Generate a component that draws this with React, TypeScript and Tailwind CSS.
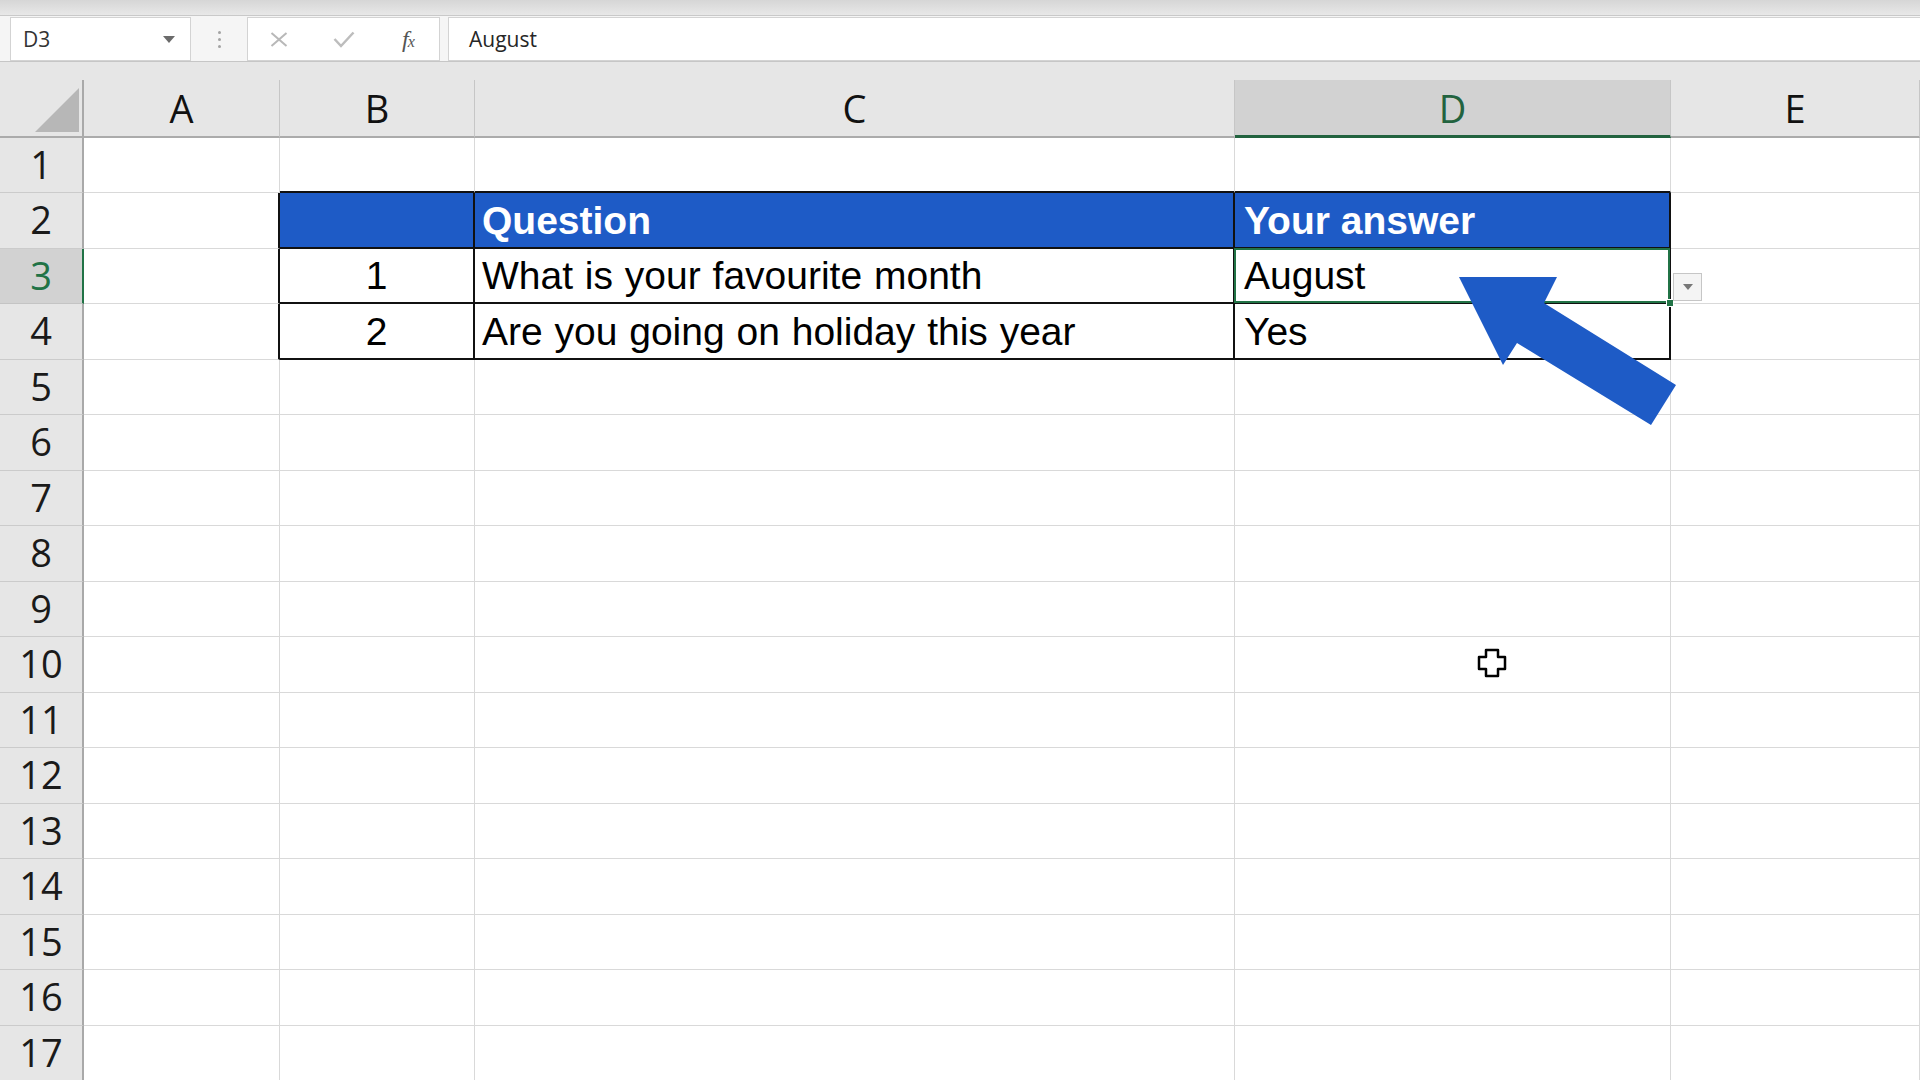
import React from "react";

const ROWS = Array.from({ length: 17 }, (_, i) => i + 1);
const LETTERS = ["A", "B", "C", "D", "E"];
const WIDTHS = ["w-[196px]", "w-[195px]", "w-[760px]", "w-[436px]", "flex-1 min-w-0"];

const TABLE: Record<number, string[]> = {
  2: ["", "Question", "Your answer"],
  3: ["1", "What is your favourite month", "August"],
  4: ["2", "Are you going on holiday this year", "Yes"],
};

function cellCls(r: number, c: number) {
  const parts = ["h-full flex items-center shrink-0 overflow-visible whitespace-nowrap", WIDTHS[c]];
  const rightBlack = r >= 2 && r <= 4 && c <= 3;
  const bottomBlack = r <= 4 && c >= 1 && c <= 3;
  parts.push(rightBlack ? "border-r-2 border-r-[#111111]" : "border-r border-r-[#d9d9d9]");
  parts.push(bottomBlack ? "border-b-2 border-b-[#111111]" : "border-b border-b-[#d9d9d9]");
  parts.push(r === 2 && c >= 1 && c <= 3 ? "bg-[#1e5bc6]" : "bg-white");
  if (c === 1) parts.push("justify-center");
  if (c === 2) parts.push("pl-[7px]");
  if (c === 3) parts.push("pl-[9px]");
  if (r === 3 && c === 3) parts.push("relative");
  return parts.join(" ");
}

function Cell({ r, c }: { r: number; c: number }) {
  const data = TABLE[r];
  const text = data && c >= 1 && c <= 3 ? data[c - 1] : "";
  const header = r === 2;
  return (
    <div className={cellCls(r, c)}>
      {text ? (
        <span
          className={
            header
              ? "font-['Liberation_Sans',Arial,sans-serif] text-[39px] font-bold text-white leading-none"
              : "font-['Liberation_Sans',Arial,sans-serif] text-[39px] text-black leading-none [word-spacing:1px]"
          }
        >
          {text}
        </span>
      ) : null}
      {r === 3 && c === 3 ? (
        <>
          <div className="absolute -left-[1px] -top-[1px] -right-[1px] -bottom-[1px] border-2 border-[#217346] pointer-events-none" />
          <div className="absolute -right-[5px] -bottom-[5px] w-[8px] h-[8px] bg-[#217346] border border-white" />
          <div className="absolute left-[438px] top-[24px] w-[29px] h-[28px] bg-[#f4f4f4] border border-[#c6c6c6] flex items-center justify-center">
            <svg width="10" height="6" viewBox="0 0 10 6">
              <polygon points="0,0 10,0 5,6" fill="#777777" />
            </svg>
          </div>
        </>
      ) : null}
    </div>
  );
}

function Row({ n }: { n: number }) {
  const h = n % 2 === 1 ? "h-[55px]" : "h-[56px]";
  const sel = n === 3;
  return (
    <div className={"flex shrink-0 " + h}>
      <div
        className={
          sel
            ? "w-[84px] shrink-0 h-full flex items-center justify-center bg-[#d2d2d2] border-b border-b-[#c4c4c4] border-r-2 border-r-[#217346] text-[#217346]"
            : "w-[84px] shrink-0 h-full flex items-center justify-center bg-[#e6e6e6] border-b border-b-[#cbcbcb] border-r-2 border-r-[#a9a9a9] text-[#1a1a1a]"
        }
      >
        <span className="text-[38px] leading-none pb-[3px]">{n}</span>
      </div>
      {[0, 1, 2, 3, 4].map((c) => (
        <Cell key={c} r={n} c={c} />
      ))}
    </div>
  );
}

export default function App() {
  return (
    <div className="relative w-[1920px] h-[1080px] overflow-hidden bg-white font-['Open_Sans','Noto_Sans',sans-serif] flex flex-col">
      {/* top strip */}
      <div className="h-[16px] shrink-0 bg-gradient-to-b from-[#d6d6d6] to-[#e8e8e8] border-b border-b-[#c9c9c9]" />

      {/* formula bar */}
      <div className="h-[46px] shrink-0 bg-[#f5f5f5] border-b border-b-[#c6c6c6] flex items-start pt-[1px]">
        <div className="ml-[10px] w-[181px] h-[44px] bg-white border border-[#d3d3d3] flex items-center justify-between pl-[12px] pr-[15px]">
          <span className="text-[21px] text-[#333333] leading-none">D3</span>
          <svg width="12" height="7" viewBox="0 0 12 7">
            <polygon points="0,0 12,0 6,7" fill="#6b6b6b" />
          </svg>
        </div>
        <div className="w-[56px] h-[44px] flex flex-col items-center justify-center gap-[4px]">
          <div className="w-[3px] h-[3px] rounded-full bg-[#a3a3a3]" />
          <div className="w-[3px] h-[3px] rounded-full bg-[#a3a3a3]" />
          <div className="w-[3px] h-[3px] rounded-full bg-[#a3a3a3]" />
        </div>
        <div className="w-[193px] h-[44px] bg-white border border-[#d3d3d3] flex items-center pl-[22px]">
          <svg width="18" height="15" viewBox="0 0 18 15">
            <line x1="1.5" y1="1" x2="16.5" y2="14" stroke="#b8b8b8" strokeWidth="2" />
            <line x1="16.5" y1="1" x2="1.5" y2="14" stroke="#b8b8b8" strokeWidth="2" />
          </svg>
          <svg className="ml-[45px]" width="22" height="17" viewBox="0 0 22 17">
            <polyline points="1.5,8 8,15 20.5,1.5" fill="none" stroke="#bdbdbd" strokeWidth="2.5" />
          </svg>
          <span className="ml-[47px] font-['Liberation_Serif',serif] italic text-[#555555] leading-none flex items-baseline">
            <span className="text-[24px]">f</span>
            <span className="text-[16px] -ml-[1px]">x</span>
          </span>
        </div>
        <div className="ml-[8px] flex-1 h-[44px] bg-white border-y border-l border-[#d3d3d3] flex items-center pl-[20px]">
          <span className="text-[21px] text-[#262626] leading-none">August</span>
        </div>
      </div>

      {/* gray band */}
      <div className="h-[18px] shrink-0 bg-[#e6e6e6]" />

      {/* column header row */}
      <div className="h-[58px] shrink-0 flex bg-[#e6e6e6]">
        <div className="w-[84px] shrink-0 h-full border-r-2 border-r-[#a9a9a9] border-b-2 border-b-[#ababab] flex items-end justify-end pr-[3px] pb-[4px]">
          <svg width="44" height="44" viewBox="0 0 44 44">
            <polygon points="44,0 44,44 0,44" fill="#b7b7b7" />
          </svg>
        </div>
        {LETTERS.map((l, i) => (
          <div
            key={l}
            className={
              i === 3
                ? WIDTHS[i] + " shrink-0 h-full flex items-center justify-center bg-[#d2d2d2] border-r border-r-[#c6c6c6] border-b-[3px] border-b-[#22633f] text-[#22633f]"
                : WIDTHS[i] + " shrink-0 h-full flex items-center justify-center border-r border-r-[#c6c6c6] border-b-2 border-b-[#ababab] text-[#111111]"
            }
          >
            <span className="text-[38px] leading-none">{l}</span>
          </div>
        ))}
      </div>

      {/* rows */}
      {ROWS.map((n) => (
        <Row key={n} n={n} />
      ))}

      {/* annotation arrow */}
      <svg className="absolute left-0 top-0 pointer-events-none" width="1920" height="1080" viewBox="0 0 1920 1080">
        <polygon
          points="1459,277 1557,277 1544,303 1676,385 1651,425 1517,343 1503,365"
          fill="#1e5bc6"
        />
      </svg>

      {/* cursor */}
      <svg className="absolute left-[1477px] top-[648px] pointer-events-none" width="30" height="30" viewBox="0 0 30 30">
        <polygon
          points="9,2 21,2 21,9 28,9 28,21 21,21 21,28 9,28 9,21 2,21 2,9 9,9"
          fill="#ffffff"
          stroke="#000000"
          strokeWidth="2.5"
          strokeLinejoin="round"
        />
      </svg>
    </div>
  );
}
